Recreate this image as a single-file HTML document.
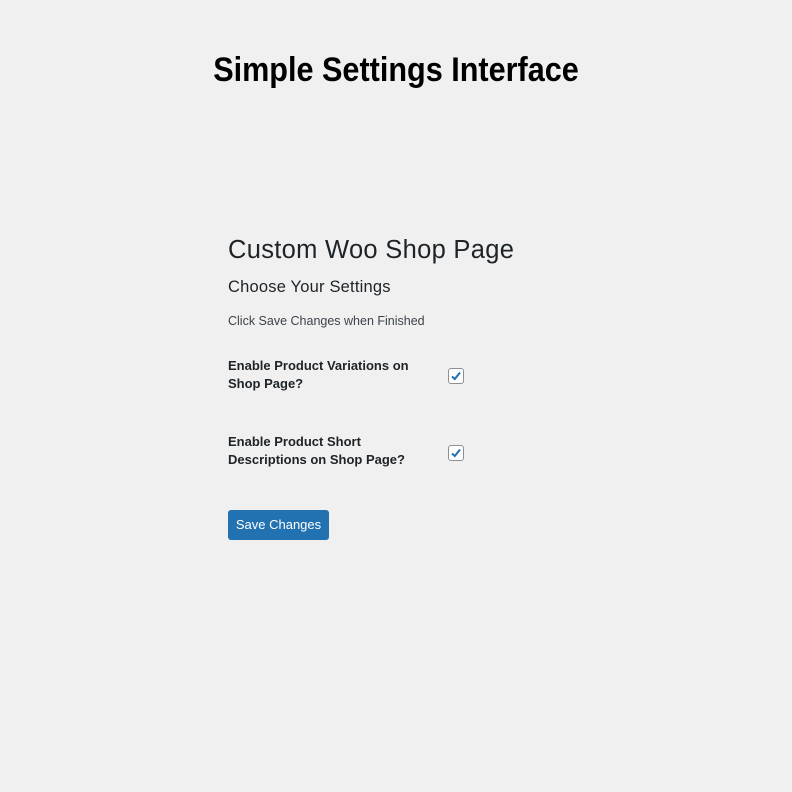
<!DOCTYPE html>
<html><head><style>
body{margin:0;width:792px;height:792px;background:#f0f0f1;font-family:"Liberation Sans",sans-serif;color:#1d2327;position:relative;overflow:hidden}
h1.t{position:absolute;top:51px;left:0;width:792px;text-align:center;margin:0;font-size:34px;font-weight:bold;color:#000;transform:scaleX(0.9)}
.a{position:absolute;left:228px}
.h{top:236px;font-size:25.5px;margin:0;font-weight:normal;letter-spacing:0.3px}
.h2{top:278px;font-size:16.5px;font-weight:normal;letter-spacing:0.2px}
.p{top:314px;font-size:12.5px;color:#3c434a}
.l{font-size:13px;font-weight:bold;line-height:18px;width:200px;color:#1d2327}
.cb{position:absolute;left:448px;width:14px;height:14px;border:1px solid #8c8f94;border-radius:3px;background:#fff}
.cb svg{position:absolute;left:1px;top:1px}
.btn{top:510px;width:101px;height:30px;background:#2271b1;border-radius:3px;color:#fff;font-size:13px;line-height:30px;text-align:center}
</style></head><body>
<h1 class="t">Simple Settings Interface</h1>
<div class="a h">Custom Woo Shop Page</div>
<div class="a h2">Choose Your Settings</div>
<div class="a p">Click Save Changes when Finished</div>
<div class="a l" style="top:357px">Enable Product Variations on Shop Page?</div>
<div class="cb" style="top:368px"><svg width="12" height="12" viewBox="0 0 12 12"><path d="M2 6.5L4.8 9L10 2.5" stroke="#2271b1" stroke-width="2" fill="none"/></svg></div>
<div class="a l" style="top:433px">Enable Product Short Descriptions on Shop Page?</div>
<div class="cb" style="top:445px"><svg width="12" height="12" viewBox="0 0 12 12"><path d="M2 6.5L4.8 9L10 2.5" stroke="#2271b1" stroke-width="2" fill="none"/></svg></div>
<div class="a btn">Save Changes</div>
</body></html>
